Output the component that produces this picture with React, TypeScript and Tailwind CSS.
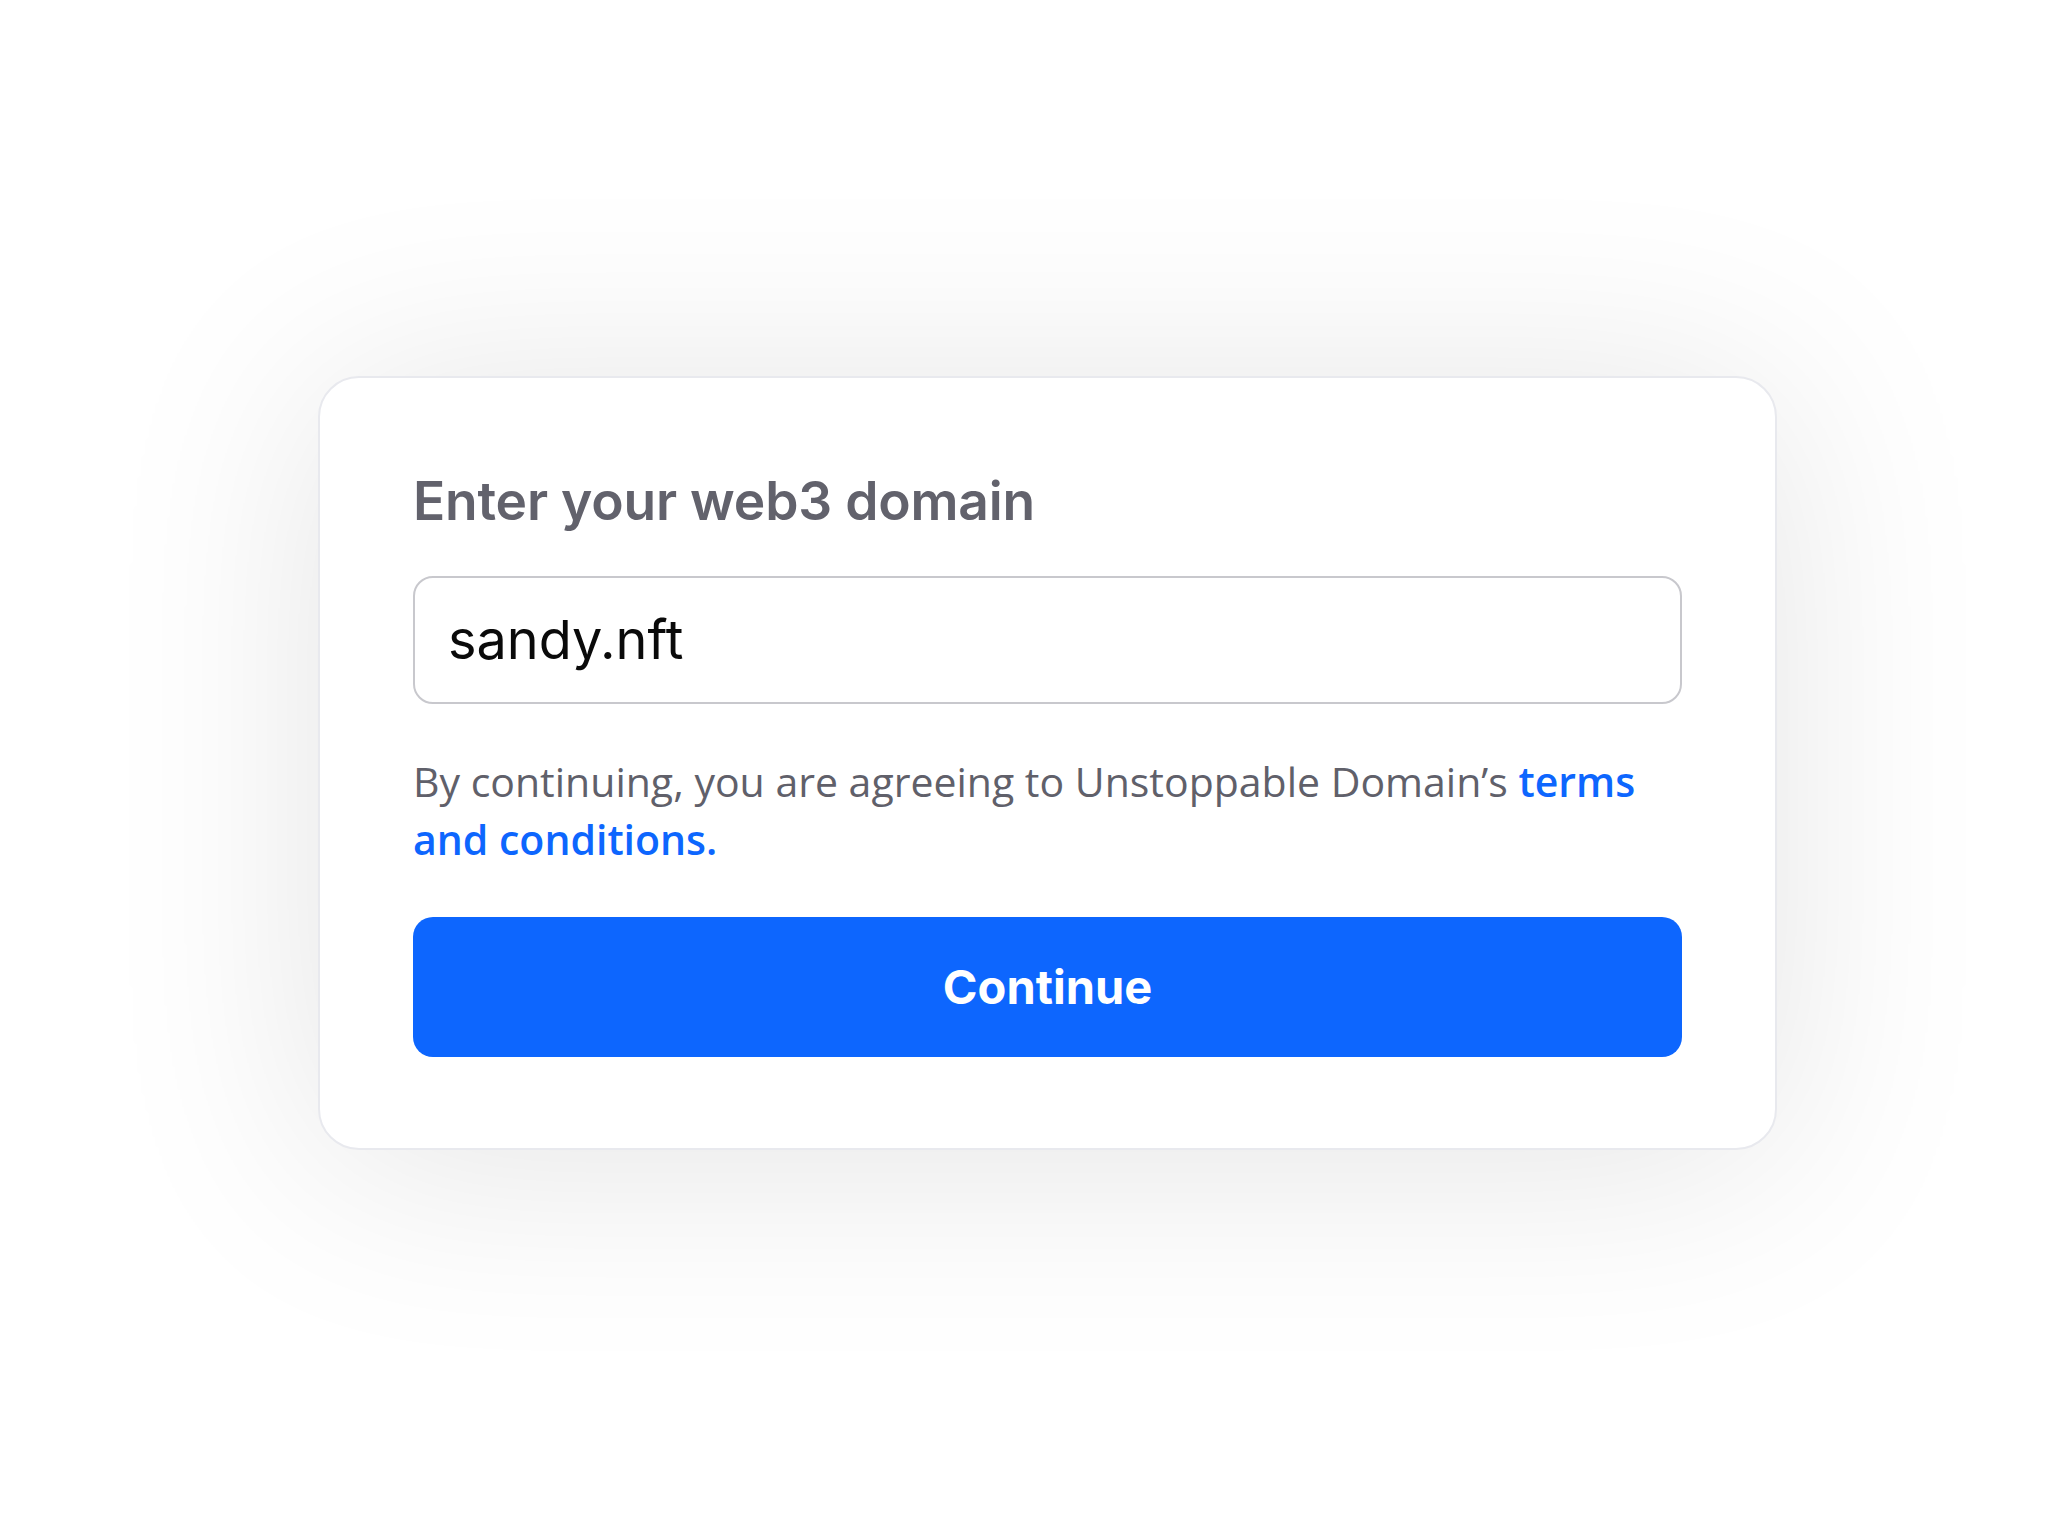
import React from "react";

export default function App() {
  return (
    <div className="w-[2048px] h-[1530px] bg-white pt-[376px] pl-[318px] overflow-hidden">
      <div className="w-[1459px] rounded-[41px] border-2 border-[#e8e9ee] bg-white shadow-[0_12px_220px_rgba(0,0,0,0.11)] pt-[90px] pb-[91px] px-[93px] flex flex-col">
        <h1 className="text-[53.3px] leading-[65px] font-semibold text-[#62626c] font-['Inter',sans-serif] tracking-[-0.2px]">
          Enter your web3 domain
        </h1>
        <div className="mt-[43px] h-[128px] rounded-[20px] border-2 border-[#c8c8cd] flex items-center pl-[33px]">
          <span className="text-[54px] text-[#0a0a0a] font-['Inter',sans-serif] leading-none">sandy.nft</span>
        </div>
        <p className="mt-[48px] text-[41px] leading-[58px] text-[#60606a] font-['Open_Sans',sans-serif]">
          By continuing, you are agreeing to Unstoppable Domain’s{" "}
          <span className="text-[#0d66fe] font-semibold">terms and conditions.</span>
        </p>
        <button className="mt-[49px] h-[140px] w-full rounded-[20px] bg-[#0d66fe] text-white text-[47px] font-bold font-['Inter',sans-serif]">
          Continue
        </button>
      </div>
    </div>
  );
}
